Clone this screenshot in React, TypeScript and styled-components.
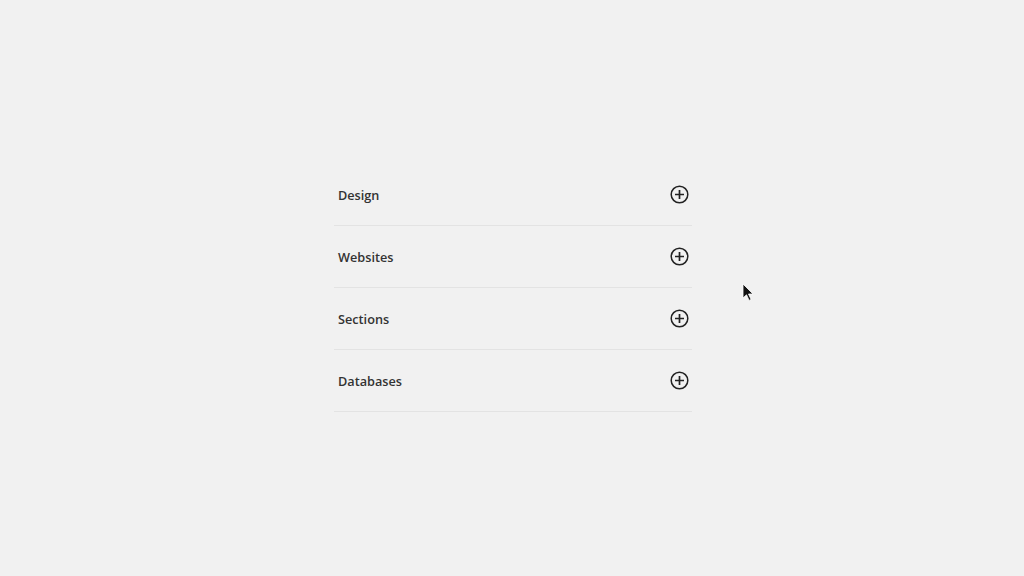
import React from 'react';
import styled, { createGlobalStyle } from 'styled-components';

const GlobalStyle = createGlobalStyle`
  html, body {
    margin: 0;
    padding: 0;
    background: #f1f1f1;
  }
  body {
    font-family: "Open Sans", "Liberation Sans", sans-serif;
  }
`;

const items = ['Design', 'Websites', 'Sections', 'Databases'];

function PlusCircle() {
  return (
    <svg width="19" height="19" viewBox="0 0 19 19" fill="none">
      <circle cx="9.5" cy="9.5" r="8.3" stroke="#222" strokeWidth="1.5" />
      <path d="M9.5 5v9M5 9.5h9" stroke="#222" strokeWidth="1.7" />
    </svg>
  );
}

function Cursor() {
  return (
    <svg width="12" height="18" viewBox="0 0 12 18">
      <path d="M1 1v14l3.5-3.2 2.6 5.6 2-1-2.6-5.4H11z" fill="#111" stroke="#fff" strokeWidth="0.8" />
    </svg>
  );
}

export default function App() {
  return (
    <Page>
      <GlobalStyle />
      <Accordion>
        {items.map((label) => (
          <Row key={label}>
            <Label>{label}</Label>
            <IconButton aria-label={`Expand ${label}`}>
              <PlusCircle />
            </IconButton>
          </Row>
        ))}
      </Accordion>
      <Pointer>
        <Cursor />
      </Pointer>
    </Page>
  );
}

const Page = styled.div`
  position: relative;
  width: 1024px;
  height: 576px;
  background: #f1f1f1;
  display: flex;
  justify-content: center;
  padding-top: 164px;
  box-sizing: border-box;
  overflow: hidden;
`;

const Accordion = styled.div`
  width: 358px;
  margin-left: 2px;
  display: flex;
  flex-direction: column;
  align-self: flex-start;
`;

const Row = styled.div`
  height: 61px;
  display: flex;
  align-items: center;
  justify-content: space-between;
  padding: 0 3px 0 4px;
  border-bottom: 1px solid #e3e3e3;
`;

const Label = styled.span`
  font-size: 12.7px;
  font-weight: 600;
  color: #333;
`;

const IconButton = styled.button`
  border: 0;
  background: none;
  padding: 0;
  width: 19px;
  height: 19px;
  display: flex;
  align-items: center;
  justify-content: center;
  cursor: pointer;
`;

const Pointer = styled.div`
  position: absolute;
  left: 742px;
  top: 283px;
`;
